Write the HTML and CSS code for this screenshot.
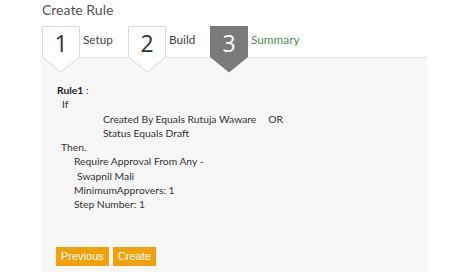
FILE: index.html
```html
<!DOCTYPE html>
<html>
<head>
<meta charset="utf-8">
<link rel="stylesheet" href="styles.css">
</head>
<body>
<div class="page">
  <h1 class="title">Create Rule</h1>
  <div class="steps">
    <div class="step">
      <div class="marker">
        <svg class="shape" width="38" height="47" viewBox="0 0 38 47"><polygon points="0.5,0.5 37.5,0.5 37.5,31 19,46 0.5,31" fill="#ffffff" stroke="#d9d9d9"/></svg>
        <span class="num">1</span>
      </div>
      <span class="label">Setup</span>
    </div>
    <div class="step">
      <div class="marker">
        <svg class="shape" width="38" height="47" viewBox="0 0 38 47"><polygon points="0.5,0.5 37.5,0.5 37.5,31 19,46 0.5,31" fill="#ffffff" stroke="#d9d9d9"/></svg>
        <span class="num">2</span>
      </div>
      <span class="label">Build</span>
    </div>
    <div class="step">
      <div class="marker">
        <svg class="shape" width="38" height="47" viewBox="0 0 38 47"><polygon points="0,0 38,0 38,31 19,46.5 0,31" fill="#7a7a7a"/></svg>
        <span class="num num-active">3</span>
      </div>
      <span class="label label-active">Summary</span>
    </div>
  </div>
  <div class="panel">
    <div class="rule">
      <div class="l-rule"><b>Rule1</b> :</div>
      <div class="l-if">If</div>
      <div class="l-cond">Created By Equals Rutuja Waware<span class="op">OR</span></div>
      <div class="l-cond">Status Equals Draft</div>
      <div class="l-then">Then.</div>
      <div class="l-act">Require Approval From Any -</div>
      <div class="l-name">Swapnil Mali</div>
      <div class="l-act">MinimumApprovers: 1</div>
      <div class="l-act">Step Number: 1</div>
    </div>
    <div class="buttons">
      <button class="btn">Previous</button>
      <button class="btn">Create</button>
    </div>
  </div>
</div>
</body>
</html>
```
FILE: styles.css
```css
html, body {
  margin: 0;
  padding: 0;
  background: #ffffff;
}
.page {
  padding: 0 47px 0 42px;
  font-family: Lato, "Open Sans", sans-serif;
  color: #333333;
}
.title {
  margin: 0;
  font-size: 14px;
  font-weight: 400;
  color: #555555;
  line-height: 20px;
  height: 26px;
}
.steps {
  position: relative;
  z-index: 1;
  display: flex;
  height: 31px;
  align-items: flex-start;
}
.step {
  display: flex;
  align-items: flex-start;
}
.step:nth-child(1) { width: 86px; }
.step:nth-child(2) { width: 82px; }
.marker {
  position: relative;
  width: 38px;
  height: 47px;
}
.shape {
  display: block;
}
.num {
  position: absolute;
  left: 0;
  top: 2px;
  width: 38px;
  text-align: center;
  font-family: "Open Sans", sans-serif;
  font-size: 23px;
  line-height: 30px;
  color: #333333;
}
.num-active {
  color: #ffffff;
}
.label {
  margin-left: 3px;
  font-size: 11.8px;
  line-height: 16px;
  margin-top: 6px;
  color: #444444;
}
.label-active {
  color: #4e8f4e;
}
.panel {
  background: #f7f7f7;
  border-top: 1px solid #e2e2e2;
  box-shadow: 0 0 1px #e8e8e8;
  height: 214px;
  padding: 0 14px 0 15px;
  display: flex;
  flex-direction: column;
}
.rule {
  font-size: 10.3px;
  line-height: 14.3px;
  padding-top: 25px;
  color: #333333;
}
.rule b {
  font-weight: 700;
  color: #222222;
}
.l-if { padding-left: 5px; }
.l-cond { padding-left: 46px; }
.op { margin-left: 12px; }
.l-then { padding-left: 4px; }
.l-act { padding-left: 17px; }
.l-name { padding-left: 20px; }
.buttons {
  display: flex;
  gap: 4px;
  margin-top: auto;
  margin-bottom: 6px;
  margin-left: -1px;
}
.btn {
  background: #f0a20b;
  border: none;
  color: #ffffff;
  font-family: "Liberation Sans", Arial, sans-serif;
  font-size: 11px;
  height: 19px;
  padding: 0 5px;
  line-height: 19px;
  border-radius: 0;
}
```
